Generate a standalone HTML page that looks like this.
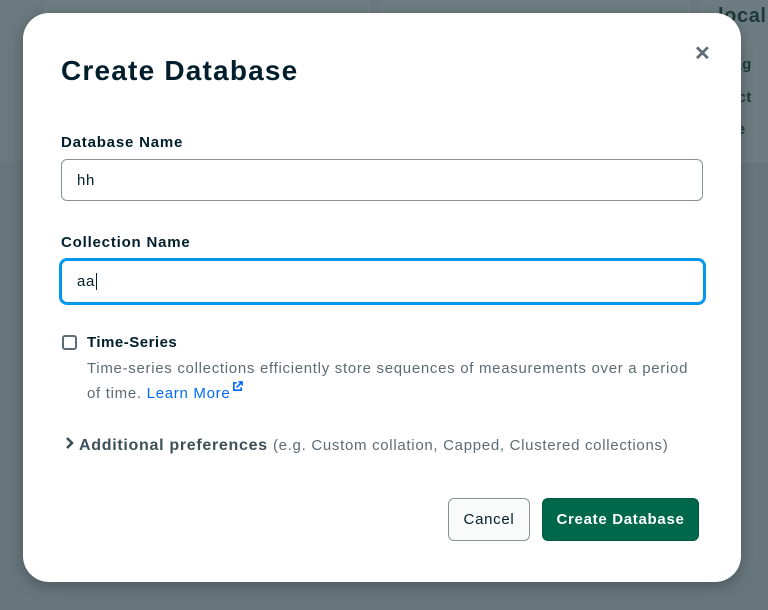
<!DOCTYPE html>
<html><head><meta charset="utf-8"><style>
*{box-sizing:border-box;margin:0;padding:0}
body{width:768px;height:610px;overflow:hidden;background:#66767c;font-family:"Liberation Sans",sans-serif;position:relative;letter-spacing:.6px}
.bgband{position:absolute;left:0;top:0;width:768px;height:162px;background:#6a797f}
.card{position:absolute;top:-10px;height:172px;background:#6c7c81;border:1px solid #718086;border-radius:8px}
.side{position:absolute;left:713px;top:0;width:55px;height:162px;color:#1d3a36;font-size:15px;font-weight:bold}
.modal{position:absolute;left:23px;top:13px;width:718px;height:569px;background:#fff;border-radius:26px;box-shadow:0 4px 14px rgba(0,0,0,.25)}
h1{position:absolute;left:38px;top:42px;font-size:28px;font-weight:bold;color:#001e2b;letter-spacing:1.2px}
.x{position:absolute;left:671px;top:28px;font-size:20px;font-weight:bold;color:#5c6c75}
.lbl{position:absolute;left:38px;font-size:15px;font-weight:bold;color:#001e2b;letter-spacing:.8px}
.inp{position:absolute;left:38px;width:642px;height:42px;border:1px solid #889397;border-radius:6px;font-size:15px;color:#001e2b;padding:12px 0 0 15px}
.inp.f{left:36px;top:245px;width:647px;height:47px;border:3px solid #0498ec;border-radius:8px;padding:12px 0 0 15px}
.cb{position:absolute;left:39px;top:322px;width:15px;height:15px;border:2px solid #5c6c75;border-radius:3px}
.ts{position:absolute;left:64px;top:321px;font-size:15px;font-weight:bold;color:#001e2b;letter-spacing:.5px}
.desc{position:absolute;left:64px;top:344px;width:620px;font-size:15px;line-height:24px;color:#5c6c75;letter-spacing:.7px;white-space:nowrap}
.desc a{color:#016bf8;text-decoration:none}
.add{position:absolute;left:42px;top:423px;font-size:16px;color:#5c6c75;letter-spacing:.7px}
.add b{color:#3d4f58}
.btn{position:absolute;top:485px;height:43px;border-radius:6px;font-size:15px;text-align:center;line-height:41px;letter-spacing:.7px}
.cancel{left:425px;width:82px;border:1px solid #889397;background:#f9fbfa;color:#001e2b}
.create{left:519px;width:157px;background:#00684a;color:#fff;font-weight:bold;border:1px solid #00593f}
</style></head><body>
<div class="bgband"></div>
<div class="card" style="left:45px;width:325px"></div>
<div class="card" style="left:380px;width:310px"></div>
<div class="card" style="left:700px;width:80px"></div>
<div class="side"><div style="position:absolute;left:5px;top:5px;font-size:20px">local</div><div style="position:absolute;left:4px;top:56px">orag</div><div style="position:absolute;left:6px;top:89px">llect</div><div style="position:absolute;left:6px;top:121px">exe</div></div>
<div class="modal">
<h1>Create Database</h1>
<div class="x">✕</div>
<div class="lbl" style="top:121px">Database Name</div>
<div class="inp" style="top:146px">hh</div>
<div class="lbl" style="top:221px">Collection Name</div>
<div class="inp f">aa<span style="border-left:1px solid #001e2b;margin-left:1px"></span></div>
<div class="cb"></div>
<div class="ts">Time-Series</div>
<div class="desc">Time-series collections efficiently store sequences of measurements over a period<br>of time. <a>Learn More<svg width="11" height="11" viewBox="0 0 12 12" style="vertical-align:6px;margin-left:2px"><path d="M5 2H2v8h8V7M7 1h4v4M11 1L5 7" stroke="#016bf8" stroke-width="1.8" fill="none"/></svg></a></div>
<div class="add"><svg width="10" height="14" viewBox="0 0 10 14" style="margin-right:4px"><path d="M2 2l5 5-5 5" stroke="#3d4f58" stroke-width="2.6" fill="none"/></svg><b>Additional preferences</b> <span style="font-size:15px">(e.g. Custom collation, Capped, Clustered collections)</span></div>
<div class="btn cancel">Cancel</div>
<div class="btn create">Create Database</div>
</div>
</body></html>
